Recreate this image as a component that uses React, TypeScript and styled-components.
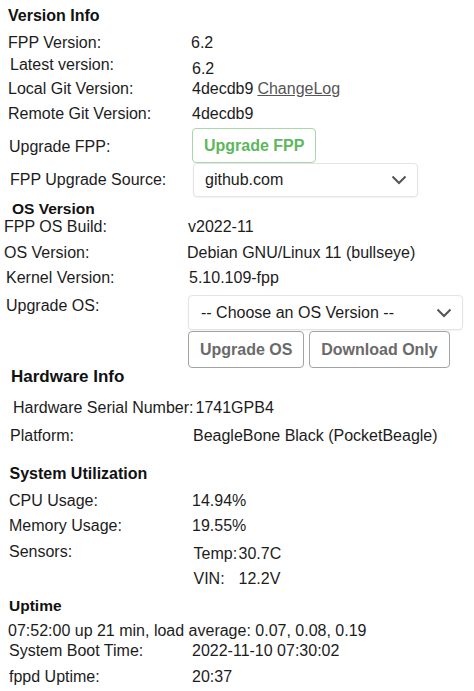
import React from "react";
import styled, { createGlobalStyle } from "styled-components";

const GlobalStyle = createGlobalStyle`
  html, body {
    margin: 0;
    padding: 0;
    background: #ffffff;
    overflow: hidden;
  }
  body {
    font-family: "Liberation Sans", Arial, sans-serif;
    font-size: 16px;
    color: #1c1c1c;
  }
`;

const Page = styled.div`
  width: 474px;
  height: 691px;
  padding-top: 6.5px;
  box-sizing: border-box;
  line-height: 18px;
`;

const Heading = styled.div<{ $x: number; $h: number; $size?: number; $mt?: number }>`
  height: ${(p) => p.$h}px;
  margin-top: ${(p) => p.$mt ?? 0}px;
  padding-left: ${(p) => p.$x}px;
  font-weight: bold;
  font-size: ${(p) => p.$size ?? 16}px;
  line-height: 18px;
  color: #111;
`;

const Row = styled.div<{ $x: number; $col: number; $h: number; $center?: boolean }>`
  display: grid;
  grid-template-columns: ${(p) => p.$col - p.$x}px 1fr;
  align-items: ${(p) => (p.$center ? "center" : "start")};
  height: ${(p) => p.$h}px;
  padding-left: ${(p) => p.$x}px;
  white-space: nowrap;
`;

const Label = styled.span<{ $pt?: number }>`
  padding-top: ${(p) => p.$pt ?? 0}px;
`;

const Value = styled.span<{ $pt?: number }>`
  padding-top: ${(p) => p.$pt ?? 0}px;
`;

const Link = styled.a`
  color: #555;
  text-decoration: underline;
  margin-left: 4px;
`;

const PrimaryButton = styled.button`
  height: 35px;
  padding: 0 11px;
  justify-self: start;
  background: #fff;
  border: 1px solid #a8d8aa;
  border-radius: 4px;
  color: #5cb85c;
  font-family: inherit;
  font-size: 16px;
  font-weight: bold;
`;

const GrayButton = styled.button`
  height: 37px;
  padding: 0 11px;
  background: #fff;
  border: 1px solid #a3a3a3;
  border-radius: 4px;
  color: #6a6a6a;
  font-family: inherit;
  font-size: 16px;
  font-weight: bold;
`;

const SelectBox = styled.div<{ $w: number; $h: number; $px: number }>`
  display: flex;
  align-items: center;
  justify-content: space-between;
  width: ${(p) => p.$w}px;
  height: ${(p) => p.$h}px;
  box-sizing: border-box;
  padding: 0 10px 0 ${(p) => p.$px}px;
  background: #fff;
  border: 1px solid #e4e4e4;
  border-radius: 4px;
  box-shadow: 0 1px 2px rgba(0, 0, 0, 0.06);
  color: #1c1c1c;
`;

const Stack = styled.div`
  display: flex;
  flex-direction: column;
`;

const ButtonRow = styled.div`
  display: flex;
  gap: 5px;
  margin-top: 1px;
`;

const SensorGrid = styled.div`
  display: grid;
  grid-template-columns: 45px auto;
  grid-auto-rows: 25px;
  padding-top: 2px;
`;

const Line = styled.div<{ $x: number; $h: number }>`
  height: ${(p) => p.$h}px;
  padding-left: ${(p) => p.$x}px;
  white-space: nowrap;
`;

const Chevron = () => (
  <svg width="16" height="10" viewBox="0 0 16 10">
    <path d="M1.5 1.5 L8 8 L14.5 1.5" fill="none" stroke="#555" strokeWidth="2" />
  </svg>
);

export default function App() {
  return (
    <>
      <GlobalStyle />
      <Page>
        <Heading $x={8} $h={27}>Version Info</Heading>
        <Row $x={8} $col={191} $h={22}>
          <Label>FPP Version:</Label>
          <Value>6.2</Value>
        </Row>
        <Row $x={10} $col={192} $h={24}>
          <Label>Latest version:</Label>
          <Value $pt={4}>6.2</Value>
        </Row>
        <Row $x={8} $col={192} $h={25}>
          <Label>Local Git Version:</Label>
          <Value>
            4decdb9<Link href="#">ChangeLog</Link>
          </Value>
        </Row>
        <Row $x={8} $col={192} $h={23.5}>
          <Label>Remote Git Version:</Label>
          <Value>4decdb9</Value>
        </Row>
        <Row $x={9} $col={192} $h={35} $center>
          <Label $pt={2}>Upgrade FPP:</Label>
          <PrimaryButton>Upgrade FPP</PrimaryButton>
        </Row>
        <Row $x={10} $col={193} $h={34} $center>
          <Label>FPP Upgrade Source:</Label>
          <SelectBox $w={225} $h={34} $px={11}>
            <span>github.com</span>
            <Chevron />
          </SelectBox>
        </Row>

        <Heading $x={12} $h={18} $mt={2.5} $size={15.5}>OS Version</Heading>
        <Row $x={4} $col={188} $h={26}>
          <Label>FPP OS Build:</Label>
          <Value>v2022-11</Value>
        </Row>
        <Row $x={4} $col={187} $h={25}>
          <Label>OS Version:</Label>
          <Value>Debian GNU/Linux 11 (bullseye)</Value>
        </Row>
        <Row $x={6} $col={189} $h={26.5}>
          <Label>Kernel Version:</Label>
          <Value>5.10.109-fpp</Value>
        </Row>
        <Row $x={6} $col={188} $h={73}>
          <Label $pt={1.5}>Upgrade OS:</Label>
          <Stack>
            <SelectBox $w={275} $h={35} $px={12}>
              <span>-- Choose an OS Version --</span>
              <Chevron />
            </SelectBox>
            <ButtonRow>
              <GrayButton style={{ width: 116 }}>Upgrade OS</GrayButton>
              <GrayButton style={{ width: 141 }}>Download Only</GrayButton>
            </ButtonRow>
          </Stack>
        </Row>

        <Heading $x={11} $h={30.5} $size={17}>Hardware Info</Heading>
        <Row $x={13} $col={195.5} $h={28}>
          <Label>Hardware Serial Number:</Label>
          <Value>1741GPB4</Value>
        </Row>
        <Row $x={10} $col={193} $h={38}>
          <Label>Platform:</Label>
          <Value>BeagleBone Black (PocketBeagle)</Value>
        </Row>

        <Heading $x={9.5} $h={27}>System Utilization</Heading>
        <Row $x={9} $col={192} $h={25}>
          <Label>CPU Usage:</Label>
          <Value>14.94%</Value>
        </Row>
        <Row $x={9} $col={192} $h={26}>
          <Label>Memory Usage:</Label>
          <Value>19.55%</Value>
        </Row>
        <Row $x={9} $col={193.5} $h={54}>
          <Label>Sensors:</Label>
          <SensorGrid>
            <span>Temp:</span>
            <span>30.7C</span>
            <span>VIN:</span>
            <span>12.2V</span>
          </SensorGrid>
        </Row>

        <Heading $x={9} $h={25} $size={15.5}>Uptime</Heading>
        <Line $x={8} $h={20}>07:52:00 up 21 min, load average: 0.07, 0.08, 0.19</Line>
        <Row $x={9} $col={192} $h={26}>
          <Label>System Boot Time:</Label>
          <Value>2022-11-10 07:30:02</Value>
        </Row>
        <Row $x={9} $col={192} $h={23.5}>
          <Label>fppd Uptime:</Label>
          <Value>20:37</Value>
        </Row>
      </Page>
    </>
  );
}
